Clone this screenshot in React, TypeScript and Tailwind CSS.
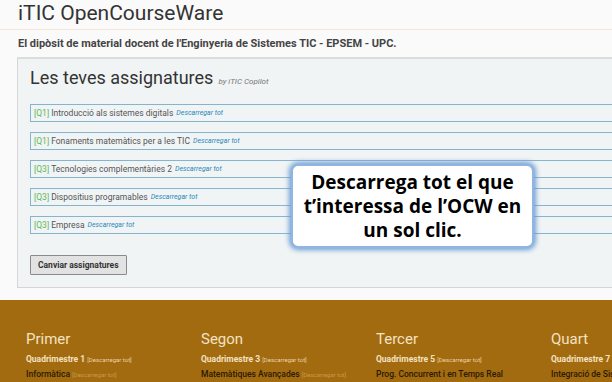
import React from "react";

const subjects = [
  { q: "Q1", name: "Introducció als sistemes digitals" },
  { q: "Q1", name: "Fonaments matemàtics per a les TIC" },
  { q: "Q3", name: "Tecnologies complementàries 2" },
  { q: "Q3", name: "Dispositius programables" },
  { q: "Q3", name: "Empresa" },
];

const years = [
  { title: "Primer", quad: "Quadrimestre 1", items: ["Informàtica", "Física"] },
  { title: "Segon", quad: "Quadrimestre 3", items: ["Matemàtiques Avançades", "Tec. Complementàries 2"] },
  { title: "Tercer", quad: "Quadrimestre 5", items: ["Prog. Concurrent i en Temps Real"] },
  { title: "Quart", quad: "Quadrimestre 7", items: ["Integració de Sistemes", "Sistemes Autònoms"] },
];

export default function App() {
  return (
    <div
      className="relative w-[612px] h-[382px] overflow-hidden bg-[#fafafa] text-[#333]"
      style={{ fontFamily: "Roboto, 'Liberation Sans', sans-serif" }}
    >
      {/* header */}
      <h1 className="px-[18px] text-[21px] leading-[26px] text-[#333]">iTIC OpenCourseWare</h1>
      <div className="mt-[3px] h-px bg-[#f3e6d4]" />
      <p className="px-[18px] pt-[7px] text-[11px] font-bold text-[#444] leading-[13px]">
        El dipòsit de material docent de l'Enginyeria de Sistemes TIC - EPSEM - UPC.
      </p>

      {/* panel */}
      <div className="mt-[7px] ml-[17px] w-[620px] h-[231px] border border-[#d6d6d6] border-t-2 border-t-[#dcdcdc] bg-[#f0f4f5] px-[12px]">
        <div className="pt-[7px] flex items-baseline gap-[5px]">
          <h2 className="text-[18px] leading-[24px] text-[#333]">Les teves assignatures</h2>
          <span className="text-[8px] italic text-[#777]">by iTIC Copilot</span>
        </div>
        <div className="mt-[14px] flex flex-col gap-[10px]">
          {subjects.map((s, i) => (
            <div
              key={i}
              className="h-[18px] border border-[#86b4cf] flex items-center pl-[3px] text-[8.5px] leading-none"
            >
              <span className="text-[#5cb85c]">[{s.q}]</span>
              <span className="ml-[2px] text-[#555]">{s.name}</span>
              <span className="ml-[3px] text-[7px] italic text-[#2a89b8]">Descarregar tot</span>
            </div>
          ))}
        </div>
        <button className="mt-[21px] h-[20px] px-[7px] bg-[#e2e2e2] border border-[#8a8a8a] rounded-[1px] text-[8.5px] font-bold text-[#333] leading-none">
          Canviar assignatures
        </button>
      </div>

      {/* footer */}
      <div className="mt-[12px] h-[100px] bg-[#a36b0f] pl-[26px] pt-[30px] flex">
        {years.map((y, i) => (
          <div key={i} className="w-[175px] shrink-0 pr-[10px]">
            <div className="text-[15px] leading-[18px] text-[#f2e3c4]">{y.title}</div>
            <div className="mt-[4px] text-[8.5px] leading-[14px] font-bold text-[#f3e2c2] whitespace-nowrap">
              {y.quad} <span className="text-[6px] font-normal text-[#e8d2a8]">[Descarregar tot]</span>
            </div>
            {y.items.map((it, j) => (
              <div key={j} className="text-[8.5px] leading-[14px] font-medium text-[#2a1a02]">
                {it}{" "}
                <span className="inline-block whitespace-nowrap text-[6px] font-normal text-[#c79a4a]">
                  [Descarregar tot]
                </span>
              </div>
            ))}
          </div>
        ))}
      </div>

      {/* callout */}
      <div
        className="absolute left-[291px] top-[164px] w-[243px] h-[84px] bg-white rounded-[7px] border-2 border-[#8fb6e2] shadow-[0_0_5px_2px_#6f9fd6] flex items-center justify-center text-center text-black font-bold text-[19px] leading-[24px]"
        style={{ fontFamily: "'Open Sans', 'Noto Sans', sans-serif" }}
      >
        <div>
          Descarrega tot el que
          <br />
          t’interessa de l’OCW en
          <br />
          un sol clic.
        </div>
      </div>
    </div>
  );
}
